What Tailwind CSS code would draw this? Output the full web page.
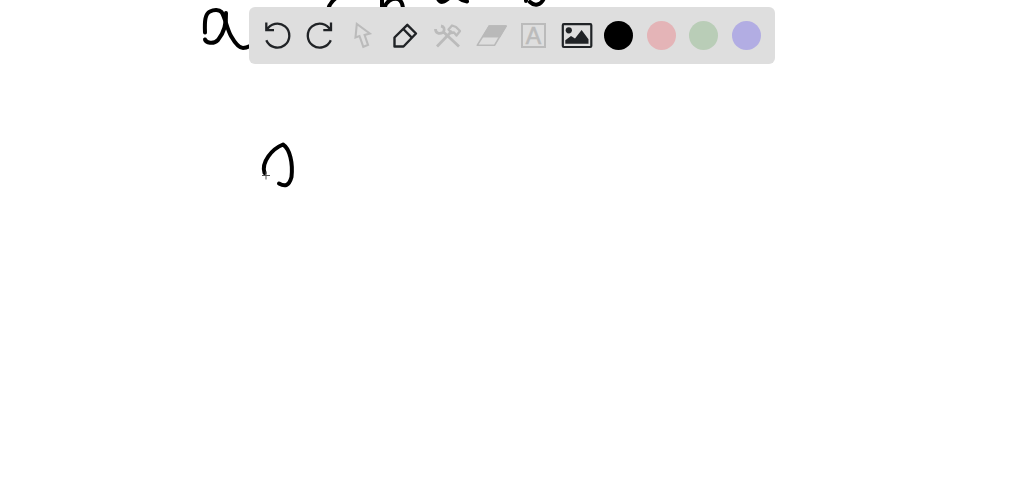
<!DOCTYPE html>
<html lang="en">
<head>
<meta charset="utf-8">
<title>Whiteboard</title>
<script src="https://cdn.jsdelivr.net/npm/@tailwindcss/browser@4"></script>
</head>
<body class="relative min-h-screen overflow-hidden bg-white font-['Liberation_Sans',sans-serif]">
  <!-- Drawing surface -->
  <svg class="absolute inset-0 h-full w-full cursor-crosshair" fill="none" stroke="#000" stroke-width="4" stroke-linecap="round" stroke-linejoin="round" role="img" aria-label="Handwritten strokes">
    <path d="M205 32.500C204.500 21 205 14 210 11.500C214 9.500 219 9.500 221.500 12C225 17 227 29 231 36C235 43 239 48 243 48C246 48 248 47 250 46"/>
    <path d="M226 13C226.500 24 223 34 218 40C213 45 206 42.500 205 39.500"/>
    <path d="M237 -3L240 -2"/>
    <path d="M336 -2C332 1 329 5 328 10M382 -4V10M384.500 8C386 1 392 -2 398 -1C402 1 403 5 403 10"/>
    <path d="M437 -3C440 4 444 3 450 -3M459 -2Q462 1 467 1.500M526 -2V1M530 2C534 6 541 6 544 -2"/>
    <path d="M264.500 173C261 162 272 149 283 144.500C290 149 293 163 291.500 177C289 186 285 187 279 183.500"/>
    <path d="M262 175.500H270M266 171.500V179.500" stroke="#555" stroke-width="1" stroke-linecap="butt"/>
  </svg>

  <!-- Toolbar -->
  <div role="toolbar" aria-label="Drawing tools" class="relative mx-auto mt-[7px] grid h-[57px] w-[526px] max-w-full grid-cols-12 items-center justify-items-center rounded-md bg-[#dedede] px-[7px] text-[#202326]">
    <button type="button" aria-label="Undo">
      <svg class="h-[41px] w-10" viewBox="0 0 40 41" fill="none" stroke="currentColor" stroke-width="2.300"><path d="M9.300 25.300A12 12 0 1 0 9.600 15.200M9.300 7.500V15.200H17"/></svg>
    </button>
    <button type="button" aria-label="Redo">
      <svg class="h-[41px] w-10" viewBox="0 0 40 41" fill="none" stroke="currentColor" stroke-width="2.300"><path d="M30.800 25.300A12 12 0 1 1 30.500 15.200M31 7.500V15.200H23.300"/></svg>
    </button>
    <button type="button" aria-label="Select" class="text-[#bbb]">
      <svg class="h-[41px] w-10" viewBox="0 0 40 41" fill="none" stroke="currentColor" stroke-width="2.100"><path d="M13.800 9L12.500 22.500L16.500 21L20.300 31.800L25 30L21.600 20L26.800 18.500Z"/></svg>
    </button>
    <button type="button" aria-label="Pen" aria-pressed="true">
      <svg class="h-[41px] w-10" viewBox="0 0 40 41" fill="none" stroke="currentColor" stroke-width="2.400" stroke-linejoin="round"><path d="M22.300 9.800L31 18.500L18.500 31.500H9.500V22.500ZM18.300 14L26.800 22.600"/></svg>
    </button>
    <button type="button" aria-label="Tools" class="text-[#bbb]">
      <svg class="h-[41px] w-10" viewBox="0 0 40 41" fill="none" stroke="currentColor" stroke-width="2.800" stroke-linejoin="round">
        <path d="M13 11C16 11.500 17 14 15.500 17L31 31.500M7.500 14C7.500 18 11 19.500 15 17.500"/>
        <path d="M9 31.500L24 16"/>
        <path d="M20.500 14.500L24 10.500L28 12L32 16L28.500 20.500L26 17.500L23.500 18Z" stroke-width="2.300"/>
      </svg>
    </button>
    <button type="button" aria-label="Eraser" class="text-[#b9b9b9]">
      <svg class="h-[41px] w-10" viewBox="0 0 40 41" fill="none" stroke="currentColor" stroke-width="1.600" stroke-linejoin="round"><path d="M18.300 11H35L23.500 30.300H6.200Z"/><path d="M18.300 11H35L28.500 21.800H12Z" fill="currentColor"/></svg>
    </button>
    <button type="button" aria-label="Text" class="text-[#bbb]">
      <svg class="h-[41px] w-10" viewBox="0 0 40 41" fill="none" stroke="currentColor" stroke-width="2"><rect x="9" y="9" width="23" height="23"/><text x="20.300" y="28.500" font-size="23" text-anchor="middle" fill="currentColor" stroke-width=".6">A</text></svg>
    </button>
    <button type="button" aria-label="Insert image">
      <svg class="h-[41px] w-10" viewBox="0 0 40 41" fill="none" stroke="currentColor" stroke-width="2.200"><rect x="6.800" y="9.200" width="28.500" height="22.800" rx="1"/><circle cx="12.800" cy="15.300" r="3.100" fill="currentColor" stroke="none"/><path d="M9.300 28.800V25.300L15 21L19 23.600L25.600 15L32.500 24.300V28.800Z" fill="currentColor" stroke="none"/></svg>
    </button>
    <button type="button" aria-label="Black" class="size-[29px] rounded-full bg-black"></button>
    <button type="button" aria-label="Red" class="size-[29px] rounded-full bg-[#e4b4b7]"></button>
    <button type="button" aria-label="Green" class="size-[29px] rounded-full bg-[#b9cdb7]"></button>
    <button type="button" aria-label="Purple" class="size-[29px] rounded-full bg-[#b2ade3]"></button>
  </div>
</body>
</html>
